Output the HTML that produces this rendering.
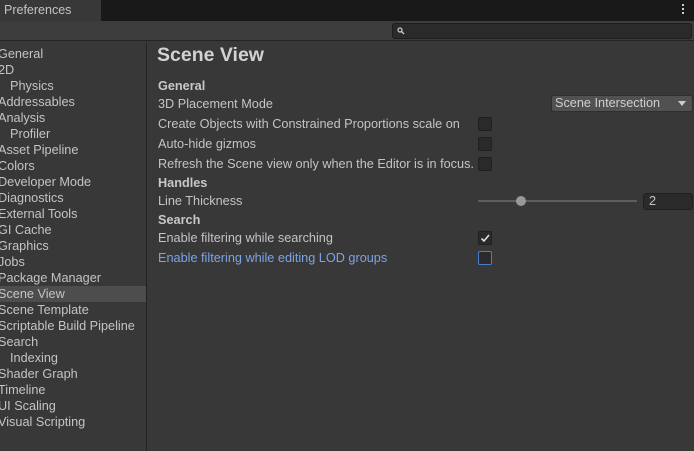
<!DOCTYPE html>
<html><head><style>
*{margin:0;padding:0;box-sizing:border-box}
body{width:694px;height:451px;background:#383838;font-family:"Liberation Sans",sans-serif;font-size:12.7px;color:#c4c4c4;position:relative;overflow:hidden}
.abs{position:absolute}
.side div{height:16px;line-height:16px;white-space:nowrap}
.cb{position:absolute;width:14px;height:14px;background:#2a2a2a;border:1px solid #202020;border-radius:2px}
.lbl{position:absolute;left:158px;white-space:nowrap}
.h{font-weight:bold;color:#c8c8c8}
</style></head><body>
<div class="abs" style="left:0;top:0;width:694px;height:21px;background:#191919"></div>
<div class="abs" style="left:0;top:0;width:101px;height:21px;background:#383838;padding-left:4px;line-height:20px;font-size:12.5px">Preferences</div>
<div class="abs" style="left:682px;top:4px;width:2px;height:10px;border-left:2px dotted #ccc"></div>
<div class="abs" style="left:0;top:21px;width:694px;height:20px;background:#3c3c3c;border-bottom:1px solid #232323"></div>
<div class="abs" style="left:392px;top:23px;width:300px;height:16px;background:#2a2a2a;border:1px solid #1e1e1e;border-radius:3px"></div>
<svg class="abs" style="left:397px;top:27px" width="8" height="8"><circle cx="3" cy="3" r="2" stroke="#ccc" fill="none" stroke-width="1.2"/><line x1="4.5" y1="4.5" x2="7" y2="7" stroke="#ccc" stroke-width="1.3"/></svg>
<div class="abs" style="left:146px;top:42px;width:1px;height:409px;background:#232323"></div>
<div class="abs" style="left:0;top:286px;width:146px;height:16px;background:#4d4d4d"></div>
<div class="abs side" style="left:-2px;top:46px">
<div>General</div><div>2D</div><div style="padding-left:12px">Physics</div><div>Addressables</div><div>Analysis</div><div style="padding-left:12px">Profiler</div><div>Asset Pipeline</div><div>Colors</div><div>Developer Mode</div><div>Diagnostics</div><div>External Tools</div><div>GI Cache</div><div>Graphics</div><div>Jobs</div><div>Package Manager</div><div>Scene View</div><div>Scene Template</div><div>Scriptable Build Pipeline</div><div>Search</div><div style="padding-left:12px">Indexing</div><div>Shader Graph</div><div>Timeline</div><div>UI Scaling</div><div>Visual Scripting</div>
</div>
<div class="abs" style="left:157px;top:44px;font-size:19.5px;font-weight:bold;color:#d2d2d2">Scene View</div>
<div class="lbl h" style="top:79px">General</div>
<div class="lbl" style="top:97px">3D Placement Mode</div>
<div class="lbl" style="top:117px">Create Objects with Constrained Proportions scale on</div>
<div class="lbl" style="top:137px">Auto-hide gizmos</div>
<div class="lbl" style="top:157px">Refresh the Scene view only when the Editor is in focus.</div>
<div class="lbl h" style="top:176px">Handles</div>
<div class="lbl" style="top:194px">Line Thickness</div>
<div class="lbl h" style="top:213px">Search</div>
<div class="lbl" style="top:231px">Enable filtering while searching</div>
<div class="lbl" style="top:251px;color:#7ba4e6">Enable filtering while editing LOD groups</div>
<div class="abs" style="left:551px;top:95px;width:142px;height:17px;background:#515151;border:1px solid #2f2f2f;border-radius:3px;padding-left:3px;line-height:15px;color:#d0d0d0">Scene Intersection</div>
<div class="abs" style="left:678px;top:101px;width:0;height:0;border-left:4px solid transparent;border-right:4px solid transparent;border-top:5px solid #ccc"></div>
<div class="cb" style="left:478px;top:117px"></div>
<div class="cb" style="left:478px;top:137px"></div>
<div class="cb" style="left:478px;top:157px"></div>
<div class="abs" style="left:478px;top:200px;width:159px;height:2px;background:#5e5e5e"></div>
<div class="abs" style="left:516px;top:196px;width:10px;height:10px;border-radius:50%;background:#999"></div>
<div class="abs" style="left:643px;top:193px;width:50px;height:17px;background:#2a2a2a;border:1px solid #202020;border-radius:3px;padding-left:5px;line-height:15px">2</div>
<div class="cb" style="left:478px;top:231px"><svg width="12" height="12" style="position:absolute;left:0;top:0"><path d="M2.5 6.5 L5 9 L10 3" stroke="#e0e0e0" stroke-width="1.6" fill="none"/></svg></div>
<div class="cb" style="left:478px;top:251px;border-color:#4a7fcf"></div>
</body></html>
